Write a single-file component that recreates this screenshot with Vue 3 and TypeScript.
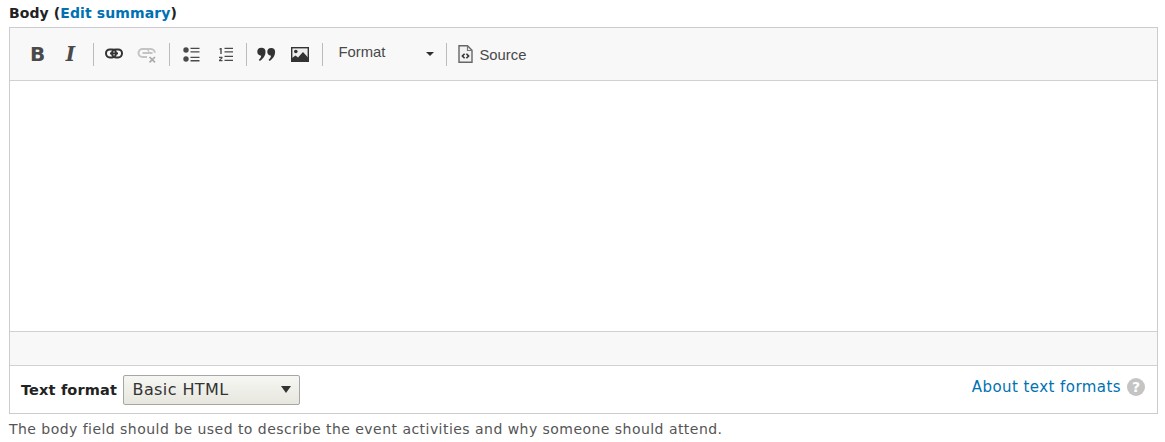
<script setup lang="ts">
const help = 'The body field should be used to describe the event activities and why someone should attend.'
</script>

<template>
  <div class="field">
    <div class="label">Body (<a class="link">Edit summary</a>)</div>
    <div class="editor">
      <div class="toolbar">
        <span class="btn glyph bold">B</span>
        <span class="btn glyph ital">I</span>
        <span class="sep"></span>
        <span class="btn">
          <svg width="18" height="18" viewBox="0 0 18 18" fill="none" stroke="#333" stroke-width="2">
            <rect x="1" y="4.4" width="10" height="8" rx="3.8" />
            <rect x="7" y="4.4" width="10" height="8" rx="3.8" />
            <path d="M5 8.4h8" />
          </svg>
        </span>
        <span class="btn">
          <svg width="20" height="18" viewBox="0 0 20 18" fill="none" stroke="#c4c4c4" stroke-width="2">
            <path d="M10 12H5.500a4 4 0 0 1 0-8h8.500a3.900 3.900 0 0 1 3.800 3.800" />
            <path d="M5.500 8h10" />
            <path d="M10 4.500a3.500 3.500 0 0 1 2 3.500" stroke-width="1.200" />
            <path d="M12.500 12l5.500 5.300M18 12l-5.500 5.300" stroke-width="1.700" stroke="#aaa" />
          </svg>
        </span>
        <span class="sep"></span>
        <span class="btn">
          <svg width="18" height="18" viewBox="0 0 18 18" fill="#4a4a4a">
            <circle cx="4" cy="5" r="2.700" />
            <circle cx="4" cy="14" r="2.700" />
            <path d="M8.500 2.800h9v1.300h-9zM8.500 6.200h9v1.300h-9zM8.500 11.700h9v1.300h-9zM8.500 15.100h9v1.300h-9z" />
          </svg>
        </span>
        <span class="btn">
          <svg width="18" height="18" viewBox="0 0 18 18" fill="#4a4a4a">
            <path d="M5.300 3h1.400v6H5.300V4.600H4.200V3.800C4.800 3.800 5.100 3.500 5.300 3zM4 11.800h3.500v1.500l-2 1.600h2v1.300H4v-1.300l2.100-1.800H4z" />
            <path d="M9.500 2.800H18v1.300H9.500zM9.500 6.200H18v1.300H9.500zM9.500 10.700H18V12H9.500zM9.500 14.700H18V16H9.500z" />
          </svg>
        </span>
        <span class="sep"></span>
        <span class="btn">
          <svg width="20" height="18" viewBox="1.500 0 20 18" fill="#333">
            <path d="M1.800 6.800a4.100 4.100 0 1 1 8.200 0c0 4.200-2.600 7.400-5.700 9.200l-1-1.200c1.300-1 2.200-2.300 2.400-4.100a4.100 4.100 0 0 1-3.900-3.900z" />
            <path d="M11.800 6.800a3.900 3.900 0 1 1 7.800 0c0 4.200-2.500 7.400-5.500 9.200l-1-1.200c1.300-1 2.200-2.300 2.400-4.100a4 4 0 0 1-3.700-3.900z" />
          </svg>
        </span>
        <span class="btn">
          <svg width="18" height="15" viewBox="0 0 18 15">
            <rect x=".7" y=".7" width="16.600" height="13.600" fill="#eee" stroke="#333" stroke-width="1.400" />
            <circle cx="4.800" cy="4.500" r="1.800" fill="#333" />
            <path d="M1 14v-3l3.500-2.500 2.500 2L12 5l5 5.500V14z" fill="#333" />
          </svg>
        </span>
        <span class="sep"></span>
        <span class="combo">
          <span class="combo-text">Format</span>
          <span class="caret"></span>
        </span>
        <span class="sep sep-after"></span>
        <span class="source">
          <svg width="15" height="18" viewBox="0 0 15 18" fill="none">
            <path d="M1 .8h8.500L14 5.300v11.900H1z" stroke="#666" stroke-width="1.400" fill="#f2f2f2" />
            <path d="M9.500 1v4.500H14" stroke="#777" stroke-width="1.200" />
            <path d="M6.600 8.800L4.400 11l2.200 2.200M8.400 8.800l2.200 2.200-2.200 2.200" stroke="#333" stroke-width="1.600" />
          </svg>
          <span class="source-text">Source</span>
        </span>
      </div>
      <div class="content"></div>
      <div class="pathbar"></div>
      <div class="format">
        <div class="format-left">
          <span class="format-label">Text format</span>
          <span class="select">
            <span>Basic HTML</span>
            <span class="select-caret"></span>
          </span>
        </div>
        <div class="format-right">
          <a class="link about">About text formats</a>
          <span class="qmark">?</span>
        </div>
      </div>
    </div>
    <div class="help">{{ help }}</div>
  </div>
</template>

<style>
html, body { margin: 0; background: #fff; }
</style>

<style scoped>
.field {
  width: 1149px;
  margin-left: 9px;
  padding-top: 4px;
  font-family: "DejaVu Sans", Verdana, sans-serif;
  color: #333;
}
.label {
  font-size: 14px;
  font-weight: 700;
  letter-spacing: 0.1px;
  line-height: 19px;
  height: 23px;
  color: #222;
}
.link { color: #0071b3; }
.editor {
  border: 1px solid #ccc;
  box-sizing: border-box;
  height: 387px;
  display: flex;
  flex-direction: column;
}
.toolbar {
  height: 53px;
  box-sizing: border-box;
  background: #f8f8f8;
  border-bottom: 1px solid #d1d1d1;
  display: flex;
  align-items: center;
  padding-left: 11px;
  flex: none;
}
.btn {
  width: 33px;
  height: 24px;
  display: flex;
  align-items: center;
  justify-content: center;
  flex: none;
}
.glyph { color: #4a4a4a; line-height: 24px; }
.bold { font: 700 20px "DejaVu Sans", sans-serif; }
.ital { font: italic 700 20px "DejaVu Serif", serif; }
.sep {
  width: 1px;
  height: 23px;
  background: #bcbcbc;
  margin: 0 4px 0 5.5px;
  flex: none;
}
.combo {
  width: 113px;
  display: flex;
  align-items: center;
  justify-content: space-between;
  padding: 0 6.5px 0 11.5px;
  box-sizing: border-box;
  flex: none;
}
.combo-text, .source-text {
  font-family: "Liberation Sans", Arial, sans-serif;
  font-size: 14.8px;
  color: #484848;
}
.combo-text { position: relative; top: -2px; }
.source-text { position: relative; top: 1px; }
.caret {
  width: 0;
  height: 0;
  border-left: 4px solid transparent;
  border-right: 4px solid transparent;
  border-top: 4px solid #2f2f2f;
}
.sep-after { margin-right: 11px; }
.source { display: flex; align-items: center; gap: 7px; }
.content { flex: 1; background: #fff; }
.pathbar {
  height: 35px;
  box-sizing: border-box;
  background: #f8f8f8;
  border-top: 1px solid #d1d1d1;
  border-bottom: 1px solid #d1d1d1;
  flex: none;
}
.format {
  height: 47px;
  flex: none;
  display: flex;
  align-items: center;
  justify-content: space-between;
  padding: 0 12px 0 11px;
  box-sizing: border-box;
}
.format-left { display: flex; align-items: center; gap: 5.500px; }
.format-label { font-size: 14.5px; font-weight: 700; color: #222; letter-spacing: 0.15px; }
.select {
  width: 177px;
  height: 30px;
  box-sizing: border-box;
  border: 1px solid #a6a6a6;
  border-radius: 2px;
  background: linear-gradient(#f6f6f3, #e7e7df);
  display: flex;
  align-items: center;
  justify-content: space-between;
  padding: 0 8px 0 9px;
  font-size: 16px;
  letter-spacing: 0.4px;
  color: #333;
}
.select-caret {
  width: 0;
  height: 0;
  border-left: 5.500px solid transparent;
  border-right: 5.500px solid transparent;
  border-top: 7px solid #333;
}
.format-right { display: flex; align-items: center; gap: 6px; margin-top: -5px; }
.about { font-size: 15px; letter-spacing: 0.44px; }
.qmark {
  width: 18px;
  height: 18px;
  border-radius: 50%;
  background: #c4c4c4;
  color: #fff;
  font-weight: 700;
  font-size: 14px;
  line-height: 18px;
  text-align: center;
}
.help {
  font-size: 14px;
  letter-spacing: 0.46px;
  color: #555;
  margin-top: 6px;
  line-height: 18px;
}
</style>
